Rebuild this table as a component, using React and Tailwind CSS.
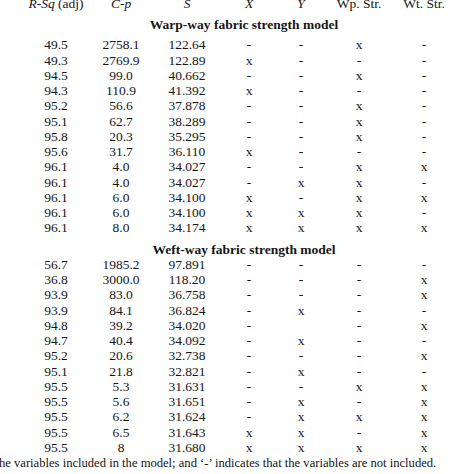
const warp = [
  ["49.5", "2758.1", "122.64", "-", "-", "x", "-"],
  ["49.3", "2769.9", "122.89", "x", "-", "-", "-"],
  ["94.5", "99.0", "40.662", "-", "-", "x", "-"],
  ["94.3", "110.9", "41.392", "x", "-", "-", "-"],
  ["95.2", "56.6", "37.878", "-", "-", "x", "-"],
  ["95.1", "62.7", "38.289", "-", "-", "x", "-"],
  ["95.8", "20.3", "35.295", "-", "-", "x", "-"],
  ["95.6", "31.7", "36.110", "x", "-", "-", "-"],
  ["96.1", "4.0", "34.027", "-", "-", "x", "x"],
  ["96.1", "4.0", "34.027", "-", "x", "x", "-"],
  ["96.1", "6.0", "34.100", "x", "-", "x", "x"],
  ["96.1", "6.0", "34.100", "x", "x", "x", "-"],
  ["96.1", "8.0", "34.174", "x", "x", "x", "x"],
];

const weft = [
  ["56.7", "1985.2", "97.891", "-", "-", "-", "-"],
  ["36.8", "3000.0", "118.20", "-", "-", "-", "x"],
  ["93.9", "83.0", "36.758", "-", "-", "-", "x"],
  ["93.9", "84.1", "36.824", "-", "x", "-", "-"],
  ["94.8", "39.2", "34.020", "-", "", "-", "x"],
  ["94.7", "40.4", "34.092", "-", "x", "-", "-"],
  ["95.2", "20.6", "32.738", "-", "-", "-", "x"],
  ["95.1", "21.8", "32.821", "-", "x", "-", "-"],
  ["95.5", "5.3", "31.631", "-", "-", "x", "x"],
  ["95.5", "5.6", "31.651", "-", "x", "-", "x"],
  ["95.5", "6.2", "31.624", "-", "x", "x", "x"],
  ["95.5", "6.5", "31.643", "x", "x", "-", "x"],
  ["95.5", "8", "31.680", "x", "x", "x", "x"],
];

const gridCls =
  "grid grid-cols-[66px_64px_68px_56px_48px_68px_62px] pl-[23px] justify-items-center";

function Rows({ rows }) {
  return rows.map((r, i) => (
    <div key={i} className={gridCls}>
      {r.map((c, j) => (
        <div key={j}>{c}</div>
      ))}
    </div>
  ));
}

export default function App() {
  return (
    <div
      className="w-[474px] h-[474px] overflow-hidden bg-white text-[#161616] text-[13.5px] leading-[15.25px]"
      style={{ fontFamily: '"Liberation Serif", "Times New Roman", serif' }}
    >
      {/* header */}
      <div className={gridCls + " leading-[8px]"}>
        <div>
          <i>R-Sq</i> (adj)
        </div>
        <div className="italic">C-p</div>
        <div className="italic">S</div>
        <div className="italic">X</div>
        <div className="italic">Y</div>
        <div>Wp. Str.</div>
        <div>Wt. Str.</div>
      </div>

      <div className="flex justify-center pl-[14px] mt-[9px] mb-[5px] font-bold">
        Warp-way fabric strength model
      </div>
      <Rows rows={warp} />

      <div className="flex justify-center pl-[14px] mt-[6px] mb-0 font-bold">
        Weft-way fabric strength model
      </div>
      <Rows rows={weft} />

      <div className="whitespace-nowrap ml-[-1px] text-[12.6px] leading-[16px]">
        he variables included in the model; and ‘-’ indicates that the variables are not included.
      </div>
    </div>
  );
}
